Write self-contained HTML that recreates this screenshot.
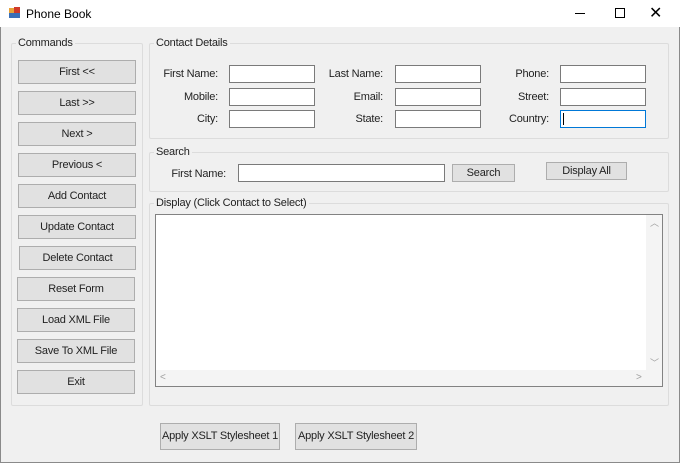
<!DOCTYPE html><html><head><style>
html,body{margin:0;padding:0}
body{width:680px;height:463px;background:#f0f0f0;font:11px "Liberation Sans",sans-serif;color:#000;position:relative;overflow:hidden;letter-spacing:-0.2px}
.a{position:absolute;white-space:nowrap}
.tb{left:0;top:0;width:680px;height:27px;background:#fff}
.g{border:1px solid #dcdcdc;border-radius:2px}
.gl{background:#f0f0f0;padding:0 2px;font-size:11px;color:#222}
.b{background:#e1e1e1;border:1px solid #adadad;box-sizing:border-box;text-align:center;font-size:11px;color:#222}
.i{background:#fff;border:1px solid #7a7a7a;box-sizing:border-box}
.l{text-align:right;font-size:11px;color:#222}
</style></head><body>
<div class="a" style="left:0;top:0;width:680px;height:463px;border:1px solid #8a8a8a;box-sizing:border-box"></div>
<div class="a tb"></div>
<div class="a" style="left:9px;top:8px;width:5px;height:5px;background:#e8a33a"></div>
<div class="a" style="left:14px;top:7px;width:6px;height:6px;background:#d03a2a"></div>
<div class="a" style="left:9px;top:13px;width:11px;height:5px;background:#3a6fb8"></div>
<div class="a" style="left:26px;top:7px;font-size:12px;letter-spacing:0">Phone Book</div>
<div class="a" style="left:575px;top:13px;width:10px;height:1px;background:#000"></div>
<div class="a" style="left:615px;top:8px;width:8px;height:8px;border:1px solid #000"></div>
<div class="a" style="left:649px;top:3px;font-size:16px">✕</div>

<div class="a g" style="left:11px;top:43px;width:130px;height:361px"></div>
<div class="a gl" style="left:16px;top:37px">Commands</div>
<div class="a b" style="left:18px;top:60px;width:118px;height:24px;line-height:22px">First &lt;&lt;</div>
<div class="a b" style="left:18px;top:91px;width:118px;height:24px;line-height:22px">Last &gt;&gt;</div>
<div class="a b" style="left:18px;top:122px;width:118px;height:24px;line-height:22px">Next &gt;</div>
<div class="a b" style="left:18px;top:153px;width:118px;height:24px;line-height:22px">Previous &lt;</div>
<div class="a b" style="left:18px;top:184px;width:118px;height:24px;line-height:22px">Add Contact</div>
<div class="a b" style="left:18px;top:215px;width:118px;height:24px;line-height:22px">Update Contact</div>
<div class="a b" style="left:19px;top:246px;width:117px;height:24px;line-height:22px">Delete Contact</div>
<div class="a b" style="left:17px;top:277px;width:118px;height:24px;line-height:22px">Reset Form</div>
<div class="a b" style="left:17px;top:308px;width:118px;height:24px;line-height:22px">Load XML File</div>
<div class="a b" style="left:17px;top:339px;width:118px;height:24px;line-height:22px">Save To XML File</div>
<div class="a b" style="left:17px;top:370px;width:118px;height:24px;line-height:22px">Exit</div>

<div class="a g" style="left:149px;top:43px;width:518px;height:94px"></div>
<div class="a gl" style="left:154px;top:37px">Contact Details</div>
<div class="a l" style="left:150px;top:68px;width:68px">First Name:</div>
<div class="a l" style="left:150px;top:91px;width:68px">Mobile:</div>
<div class="a l" style="left:150px;top:113px;width:68px">City:</div>
<div class="a i" style="left:229px;top:65px;width:86px;height:18px"></div>
<div class="a i" style="left:229px;top:88px;width:86px;height:18px"></div>
<div class="a i" style="left:229px;top:110px;width:86px;height:18px"></div>
<div class="a l" style="left:313px;top:68px;width:70px">Last Name:</div>
<div class="a l" style="left:313px;top:91px;width:70px">Email:</div>
<div class="a l" style="left:313px;top:113px;width:70px">State:</div>
<div class="a i" style="left:395px;top:65px;width:86px;height:18px"></div>
<div class="a i" style="left:395px;top:88px;width:86px;height:18px"></div>
<div class="a i" style="left:395px;top:110px;width:86px;height:18px"></div>
<div class="a l" style="left:480px;top:68px;width:69px">Phone:</div>
<div class="a l" style="left:480px;top:91px;width:69px">Street:</div>
<div class="a l" style="left:480px;top:113px;width:69px">Country:</div>
<div class="a i" style="left:560px;top:65px;width:86px;height:18px"></div>
<div class="a i" style="left:560px;top:88px;width:86px;height:18px"></div>
<div class="a i" style="left:560px;top:110px;width:86px;height:18px;border-color:#0078d7"></div>
<div class="a" style="left:563px;top:113px;width:1px;height:12px;background:#000"></div>

<div class="a g" style="left:149px;top:152px;width:518px;height:38px"></div>
<div class="a gl" style="left:154px;top:146px">Search</div>
<div class="a l" style="left:160px;top:168px;width:66px">First Name:</div>
<div class="a i" style="left:238px;top:164px;width:207px;height:18px"></div>
<div class="a b" style="left:452px;top:164px;width:63px;height:18px;line-height:16px">Search</div>
<div class="a b" style="left:546px;top:162px;width:81px;height:18px;line-height:16px">Display All</div>

<div class="a g" style="left:149px;top:203px;width:518px;height:201px"></div>
<div class="a gl" style="left:154px;top:197px">Display (Click Contact to Select)</div>
<div class="a" style="left:155px;top:214px;width:506px;height:171px;background:#fff;border:1px solid #828282"></div>
<div class="a" style="left:646px;top:215px;width:16px;height:155px;background:#f4f4f4"></div>
<div class="a" style="left:156px;top:370px;width:506px;height:16px;background:#f4f4f4"></div>
<div class="a" style="left:650px;top:216px;font-size:9px;color:#a0a0a0">︿</div>
<div class="a" style="left:650px;top:356px;font-size:9px;color:#a0a0a0">﹀</div>
<div class="a" style="left:160px;top:372px;font-size:10px;color:#a0a0a0">&lt;</div>
<div class="a" style="left:636px;top:372px;font-size:10px;color:#a0a0a0">&gt;</div>

<div class="a b" style="left:160px;top:423px;width:120px;height:27px;line-height:25px">Apply XSLT Stylesheet 1</div>
<div class="a b" style="left:295px;top:423px;width:122px;height:27px;line-height:25px">Apply XSLT Stylesheet 2</div>
</body></html>
